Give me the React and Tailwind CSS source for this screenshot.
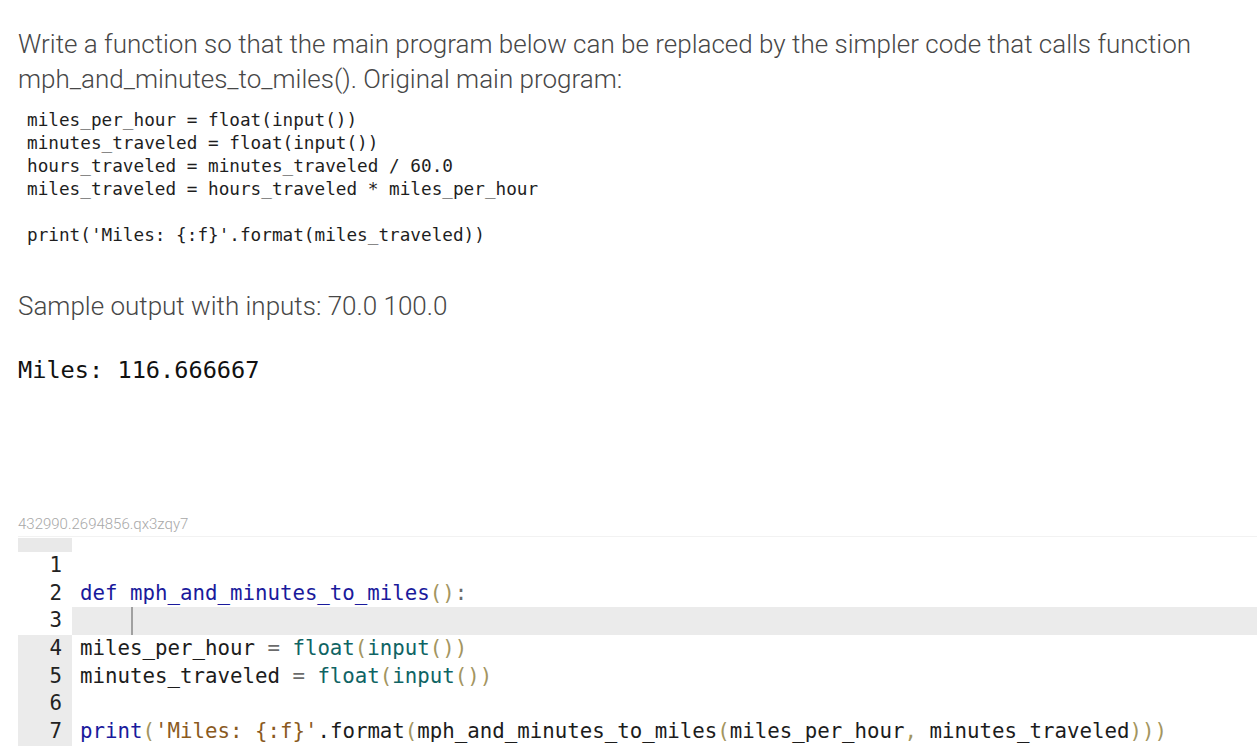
const mono = "font-['DejaVu_Sans_Mono','Liberation_Mono',monospace]";

const kw = "text-[#1a1a9c]";
const fn = "text-[#0f6464]";
const pr = "text-[#a39560]";
const st = "text-[#8a5a1e]";
const op = "text-[#6b6b6b]";

function P({ c, children }) {
  return <span className={c}>{children}</span>;
}

const editorLines = [
  { n: 1, ro: false, code: null },
  {
    n: 2,
    ro: false,
    code: (
      <>
        <P c={kw}>def</P> <P c={kw}>mph_and_minutes_to_miles</P>
        <P c={pr}>()</P>
        <P c={op}>:</P>
      </>
    ),
  },
  { n: 3, ro: false, active: true, code: null },
  {
    n: 4,
    ro: true,
    code: (
      <>
        miles_per_hour <P c={op}>=</P> <P c={fn}>float</P>
        <P c={pr}>(</P>
        <P c={fn}>input</P>
        <P c={pr}>())</P>
      </>
    ),
  },
  {
    n: 5,
    ro: true,
    code: (
      <>
        minutes_traveled <P c={op}>=</P> <P c={fn}>float</P>
        <P c={pr}>(</P>
        <P c={fn}>input</P>
        <P c={pr}>())</P>
      </>
    ),
  },
  { n: 6, ro: true, code: null },
  {
    n: 7,
    ro: true,
    code: (
      <>
        <P c={kw}>print</P>
        <P c={pr}>(</P>
        <P c={st}>'Miles: {"{:f}"}'</P>.format
        <P c={pr}>(</P>mph_and_minutes_to_miles
        <P c={pr}>(</P>miles_per_hour<P c={pr}>,</P> minutes_traveled
        <P c={pr}>)))</P>
      </>
    ),
  },
];

export default function App() {
  return (
    <div className="min-h-[754px] w-[1257px] bg-white pl-[18px] pt-[27px] font-['Roboto',sans-serif] overflow-hidden">
      <p className="text-[26px] leading-[35px] font-light text-[#474747] pr-[30px]">
        Write a function so that the main program below can be replaced by the simpler code that calls function
        mph_and_minutes_to_miles(). Original main program:
      </p>

      <pre className={`${mono} mt-[12px] ml-[9px] text-[17.7px] leading-[23px] text-[#1e1e1e] whitespace-pre`}>
{`miles_per_hour = float(input())
minutes_traveled = float(input())
hours_traveled = minutes_traveled / 60.0
miles_traveled = hours_traveled * miles_per_hour

print('Miles: {:f}'.format(miles_traveled))`}
      </pre>

      <p className="mt-[42px] text-[26px] leading-[35px] font-light text-[#474747]">
        Sample output with inputs: 70.0 100.0
      </p>

      <pre className={`${mono} mt-[31px] text-[23.6px] leading-[30px] text-[#111]`}>Miles: 116.666667</pre>

      <div className="mt-[129px] text-[15px] leading-[20px] font-light text-[#a8a8a8]">432990.2694856.qx3zqy7</div>

      <div className="mt-[2px] border-t border-[#f2f2f2] pt-[1px]">
        <div className="flex h-[14px]">
          <div className="w-[54px] bg-[#e9e9e9]" />
          <div className="flex-1" />
        </div>
        {editorLines.map((l) => (
          <div key={l.n} className={`flex h-[27.67px] ${mono} text-[20.75px] leading-[27.67px]`}>
            <div
              className={`w-[54px] shrink-0 text-right pr-[10px] text-[#222] ${
                l.ro ? "bg-[#ebebeb]" : "bg-white"
              }`}
            >
              {l.n}
            </div>
            <div
              className={`flex-1 pl-[8px] whitespace-pre text-[#1c1c1c] relative ${
                l.active ? "bg-[#ebebeb]" : ""
              }`}
            >
              {l.code}
              {l.active && <span className="absolute left-[59px] top-0 h-full w-[2px] bg-[#a0a0a0]" />}
            </div>
          </div>
        ))}
      </div>
    </div>
  );
}
